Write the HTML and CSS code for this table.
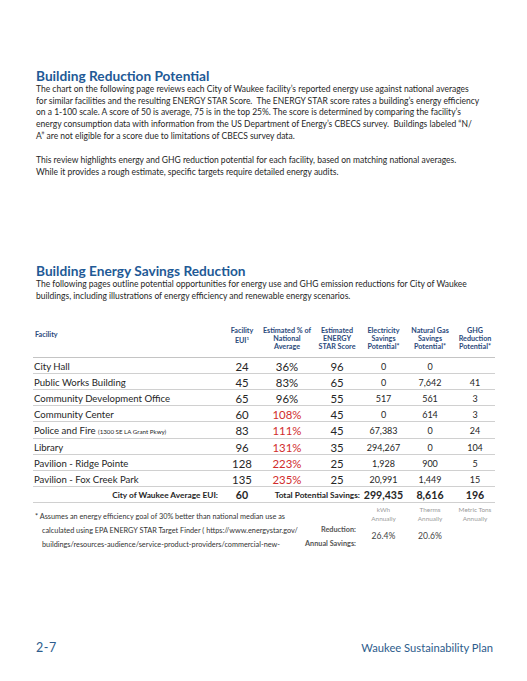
FILE: index.html
```html
<!DOCTYPE html>
<html lang="en">
<head>
    <meta charset="UTF-8">
    <meta name="viewport" content="width=device-width, initial-scale=1.0">
    <title>Building Reduction Potential - Waukee Sustainability Plan</title>
    <link rel="stylesheet" href="styles.css">
</head>
<body>
    <div class="page">
        <h1 class="section-title">Building Reduction Potential</h1>
        <p class="section-text">
            The chart on the following page reviews each City of Waukee facility’s reported energy use against national averages<br>
            for similar facilities and the resulting ENERGY STAR Score.&nbsp; The ENERGY STAR score rates a building’s energy efficiency<br>
            on a 1-100 scale. A score of 50 is average, 75 is in the top 25%. The score is determined by comparing the facility’s<br>
            energy consumption data with information from the US Department of Energy’s CBECS survey.&nbsp; Buildings labeled “N/<br>
            A” are not eligible for a score due to limitations of CBECS survey data.
        </p>
        <p class="section-text">
            This review highlights energy and GHG reduction potential for each facility, based on matching national averages.<br>
            While it provides a rough estimate, specific targets require detailed energy audits.
        </p>

        <h2 class="section-title second">Building Energy Savings Reduction</h2>
        <p class="section-text">
            The following pages outline potential opportunities for energy use and GHG emission reductions for City of Waukee<br>
            buildings, including illustrations of energy efficiency and renewable energy scenarios.
        </p>

        <table class="savings-table">
            <colgroup>
                <col class="c-name">
                <col class="c-eui">
                <col class="c-pct">
                <col class="c-score">
                <col class="c-elec">
                <col class="c-gas">
                <col class="c-ghg">
            </colgroup>
            <thead>
                <tr>
                    <th class="th-name">Facility</th>
                    <th>Facility<br>EUI<sup>1</sup></th>
                    <th>Estimated % of<br>National<br>Average</th>
                    <th>Estimated<br>ENERGY<br>STAR Score</th>
                    <th>Electricity<br>Savings<br>Potential*</th>
                    <th>Natural Gas<br>Savings<br>Potential*</th>
                    <th>GHG<br>Reduction<br>Potential*</th>
                </tr>
            </thead>
            <tbody>
                <tr>
                    <td class="name">City Hall</td>
                    <td class="big">24</td>
                    <td class="big">36%</td>
                    <td class="big">96</td>
                    <td>0</td>
                    <td>0</td>
                    <td></td>
                </tr>
                <tr>
                    <td class="name">Public Works Building</td>
                    <td class="big">45</td>
                    <td class="big">83%</td>
                    <td class="big">65</td>
                    <td>0</td>
                    <td>7,642</td>
                    <td>41</td>
                </tr>
                <tr>
                    <td class="name">Community Development Office</td>
                    <td class="big">65</td>
                    <td class="big">96%</td>
                    <td class="big">55</td>
                    <td>517</td>
                    <td>561</td>
                    <td>3</td>
                </tr>
                <tr>
                    <td class="name">Community Center</td>
                    <td class="big">60</td>
                    <td class="big over">108%</td>
                    <td class="big">45</td>
                    <td>0</td>
                    <td>614</td>
                    <td>3</td>
                </tr>
                <tr>
                    <td class="name">Police and Fire <span class="addr">(1300 SE LA Grant Pkwy)</span></td>
                    <td class="big">83</td>
                    <td class="big over">111%</td>
                    <td class="big">45</td>
                    <td>67,383</td>
                    <td>0</td>
                    <td>24</td>
                </tr>
                <tr>
                    <td class="name">Library</td>
                    <td class="big">96</td>
                    <td class="big over">131%</td>
                    <td class="big">35</td>
                    <td>294,267</td>
                    <td>0</td>
                    <td>104</td>
                </tr>
                <tr>
                    <td class="name">Pavilion - Ridge Pointe</td>
                    <td class="big">128</td>
                    <td class="big over">223%</td>
                    <td class="big">25</td>
                    <td>1,928</td>
                    <td>900</td>
                    <td>5</td>
                </tr>
                <tr>
                    <td class="name">Pavilion - Fox Creek Park</td>
                    <td class="big">135</td>
                    <td class="big over">235%</td>
                    <td class="big">25</td>
                    <td>20,991</td>
                    <td>1,449</td>
                    <td>15</td>
                </tr>
                <tr class="total-row">
                    <td class="total-label">City of Waukee Average EUI:</td>
                    <td class="total-num">60</td>
                    <td class="total-label" colspan="2">Total Potential Savings:</td>
                    <td class="total-num">299,435</td>
                    <td class="total-num">8,616</td>
                    <td class="total-num">196</td>
                </tr>
            </tbody>
        </table>

        <div class="table-notes">
            <div class="footnote">
                <span class="fn-line">* Assumes an energy efficiency goal of 30% better than national median use as</span>
                <span class="fn-line indent">calculated using EPA ENERGY STAR Target Finder ( https://www.energystar.gov/</span>
                <span class="fn-line indent">buildings/resources-audience/service-product-providers/commercial-new-</span>
            </div>
            <div class="note-labels">
                <span>Reduction:</span>
                <span>Annual Savings:</span>
            </div>
            <div class="note-col">
                <span class="unit">kWh<br>Annually</span>
                <span class="pct">26.4%</span>
            </div>
            <div class="note-col">
                <span class="unit">Therms<br>Annually</span>
                <span class="pct">20.6%</span>
            </div>
            <div class="note-col">
                <span class="unit">Metric Tons<br>Annually</span>
            </div>
        </div>

        <footer class="page-footer">
            <span class="page-num">2-7</span>
            <span class="doc-name">Waukee Sustainability Plan</span>
        </footer>
    </div>
</body>
</html>
```

FILE: styles.css
```css
* {
    margin: 0;
    padding: 0;
    box-sizing: border-box;
}

body {
    font-family: Lato, "Open Sans", sans-serif;
    background: white;
    color: #262626;
}

.page {
    width: 527px;
    min-height: 681px;
    padding: 68px 32px 26px 33px;
    display: flex;
    flex-direction: column;
}

.section-title {
    font-size: 13.7px;
    font-weight: 700;
    line-height: 16px;
    color: #1f5a96;
    padding-left: 3px;
}

.section-title.second {
    margin-top: 85px;
}

.section-text {
    font-size: 8.5px;
    line-height: 11.7px;
    padding-left: 3px;
    color: #262626;
    white-space: nowrap;
}

.section-text + .section-text {
    margin-top: 12.5px;
}

/* table */

.savings-table {
    width: 462px;
    margin-top: 24px;
    border-collapse: collapse;
    table-layout: fixed;
}

.c-name { width: 189px; }
.c-eui { width: 40px; }
.c-pct { width: 50px; }
.c-score { width: 50px; }
.c-elec { width: 43px; }
.c-gas { width: 50px; }
.c-ghg { width: 40px; }

.savings-table th {
    font-size: 7.2px;
    line-height: 8.3px;
    font-weight: 700;
    color: #2b4a7c;
    text-align: center;
    vertical-align: top;
    padding-bottom: 5px;
    border-bottom: 1px solid #c4c4c4;
    white-space: nowrap;
}

.savings-table th sup {
    font-size: 4.5px;
    vertical-align: 3px;
}

.savings-table th.th-name {
    text-align: left;
    padding-top: 4px;
    padding-left: 2px;
}

.savings-table td {
    height: 16px;
    padding-top: 3px;
    line-height: 12px;
    font-size: 9px;
    text-align: center;
    border-bottom: 1px solid #d0d0d0;
    white-space: nowrap;
    color: #262626;
}

.savings-table td.name {
    text-align: left;
    font-size: 9.6px;
    padding-left: 1px;
}

.savings-table td.big {
    font-size: 11.4px;
}

.savings-table td.over {
    color: #d12c2c;
}

.addr {
    font-size: 6.2px;
}

.total-row td {
    font-weight: 700;
    padding-top: 1px;
}

.savings-table td.total-label {
    font-size: 8.3px;
    text-align: right;
    padding-right: 4px;
}

.savings-table td.total-label[colspan] {
    padding-right: 2px;
}

.savings-table td.total-num {
    font-size: 10.6px;
}

/* notes below table */

.table-notes {
    width: 462px;
    display: grid;
    grid-template-columns: 267px 62px 43px 50px 40px;
}

.footnote {
    padding-top: 7px;
    padding-left: 2px;
    font-size: 7.3px;
    line-height: 14.3px;
    color: #333;
}

.fn-line {
    display: block;
    white-space: nowrap;
}

.fn-line.indent {
    padding-left: 7px;
}

.note-labels {
    padding-top: 20px;
    padding-right: 6px;
    display: flex;
    flex-direction: column;
    align-items: flex-end;
    font-size: 7.3px;
    line-height: 14.7px;
    font-weight: 700;
    color: #555;
}

.note-col {
    display: flex;
    flex-direction: column;
    align-items: center;
    text-align: center;
}

.unit {
    padding-top: 2px;
    font-size: 6.4px;
    line-height: 9px;
    color: #9a9a9a;
    white-space: nowrap;
}

.pct {
    margin-top: 8px;
    font-size: 8.6px;
    color: #444;
}

.page-footer {
    margin-top: auto;
    display: flex;
    justify-content: space-between;
    align-items: baseline;
    color: #2d5c8c;
    padding-left: 3px;
}

.page-num {
    font-size: 12.5px;
    letter-spacing: 0.5px;
}

.doc-name {
    font-size: 11.2px;
    padding-right: 2px;
}
```
